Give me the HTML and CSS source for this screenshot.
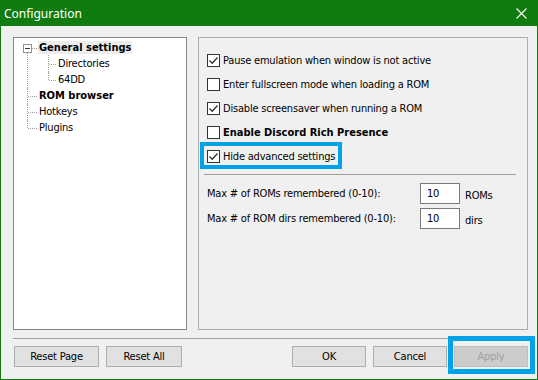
FILE: index.html
```html
<!DOCTYPE html>
<html lang="en">
<head>
    <meta charset="UTF-8">
    <title>Configuration</title>
    <link rel="stylesheet" href="styles.css">
</head>
<body>
    <div class="window">
        <div class="titlebar">
            <span class="title">Configuration</span>
            <svg class="close" width="11" height="11" viewBox="0 0 11 11">
                <path d="M0.5 0.5 L10.5 10.5 M10.5 0.5 L0.5 10.5" stroke="#fff" stroke-width="1.1" fill="none"/>
            </svg>
        </div>
        <div class="body">
            <div class="main">
                <div class="tree">
                    <ul class="tree-root">
                        <li class="first">
                            <span class="expander"></span>
                            <span class="node bold selected">General settings</span>
                            <ul class="tree-sub">
                                <li><span class="node">Directories</span></li>
                                <li><span class="node">64DD</span></li>
                            </ul>
                        </li>
                        <li><span class="node bold">ROM browser</span></li>
                        <li><span class="node">Hotkeys</span></li>
                        <li><span class="node">Plugins</span></li>
                    </ul>
                </div>
                <div class="panel">
                    <div class="options">
                        <div class="check-row">
                            <span class="checkbox"><svg width="11" height="11" viewBox="0 0 11 11"><path d="M1.5 5.5 L4.3 8.3 L9.5 2.5" stroke="#333" stroke-width="1.3" fill="none"/></svg></span>
                            <span>Pause emulation when window is not active</span>
                        </div>
                        <div class="check-row">
                            <span class="checkbox"></span>
                            <span>Enter fullscreen mode when loading a ROM</span>
                        </div>
                        <div class="check-row">
                            <span class="checkbox"><svg width="11" height="11" viewBox="0 0 11 11"><path d="M1.5 5.5 L4.3 8.3 L9.5 2.5" stroke="#333" stroke-width="1.3" fill="none"/></svg></span>
                            <span>Disable screensaver when running a ROM</span>
                        </div>
                        <div class="check-row">
                            <span class="checkbox"></span>
                            <span class="bold">Enable Discord Rich Presence</span>
                        </div>
                        <div class="check-row marked">
                            <span class="checkbox"><svg width="11" height="11" viewBox="0 0 11 11"><path d="M1.5 5.5 L4.3 8.3 L9.5 2.5" stroke="#333" stroke-width="1.3" fill="none"/></svg></span>
                            <span>Hide advanced settings</span>
                            <span class="highlight"></span>
                        </div>
                    </div>
                    <div class="panel-sep"></div>
                    <div class="fields">
                        <div class="field-row">
                            <span class="field-label">Max # of ROMs remembered (0-10):</span>
                            <span class="textbox">10</span>
                            <span class="unit">ROMs</span>
                        </div>
                        <div class="field-row">
                            <span class="field-label">Max # of ROM dirs remembered (0-10):</span>
                            <span class="textbox">10</span>
                            <span class="unit">dirs</span>
                        </div>
                    </div>
                </div>
            </div>
            <div class="separator"></div>
            <div class="buttons">
                <div class="btn-group">
                    <button class="btn wide">Reset Page</button>
                    <button class="btn mid">Reset All</button>
                </div>
                <div class="btn-group">
                    <button class="btn">OK</button>
                    <button class="btn">Cancel</button>
                    <button class="btn apply" disabled>Apply<span class="highlight"></span></button>
                </div>
            </div>
        </div>
    </div>
</body>
</html>
```

FILE: styles.css
```css
body {
    margin: 0;
    font-family: "DejaVu Sans Condensed", "Liberation Sans", Arial, sans-serif;
    font-size: 11px;
    letter-spacing: -0.2px;
    color: #000;
}
.window {
    width: 538px;
    height: 380px;
    box-sizing: border-box;
    background: #f0f0f0;
    border: 1px solid #107c10;
    border-top: none;
}
.titlebar {
    height: 26px;
    margin: 0 -1px;
    background: #107c10;
    display: flex;
    align-items: center;
    justify-content: space-between;
    padding: 0 11px 0 4px;
}
.title {
    color: #fff;
    font-family: "Noto Sans", sans-serif;
    font-size: 12px;
    letter-spacing: 0;
}
.close {
    display: block;
}
.body {
    padding: 11px 9px 0 12px;
}
.main {
    display: flex;
    gap: 11px;
    height: 293px;
}
.bold {
    font-weight: bold;
    letter-spacing: 0;
}

/* tree */
.tree {
    width: 174px;
    box-sizing: border-box;
    background: #fff;
    border: 1px solid #828790;
    padding-top: 2px;
}
.tree ul {
    list-style: none;
    margin: 0;
}
.tree li {
    position: relative;
    line-height: 16px;
}
.tree li::before {
    content: '';
    position: absolute;
    left: 1px;
    top: 8px;
    width: 9px;
    border-top: 1px dotted #a0a0a0;
}
.tree li::after {
    content: '';
    position: absolute;
    left: 0;
    top: 0;
    bottom: 0;
    border-left: 1px dotted #a0a0a0;
}
.tree li.first::after {
    top: 13px;
}
.tree li:last-child::after {
    bottom: auto;
    height: 8px;
}
.tree-root {
    padding: 0 0 0 13px;
}
.tree-root > li {
    padding-left: 11px;
}
.tree-sub {
    padding: 0 0 0 10px;
}
.tree-sub > li {
    padding-left: 9px;
}
.tree-sub > li::before {
    width: 7px;
}
.tree-sub > li:first-child::after {
    top: -1px;
}
.node {
    padding: 0 1px;
}
.node.selected {
    background: #ececec;
}
.expander {
    position: absolute;
    left: -4px;
    top: 4px;
    width: 9px;
    height: 9px;
    box-sizing: border-box;
    border: 1px solid #919191;
    background: #fff;
    z-index: 1;
}
.expander::after {
    content: '';
    position: absolute;
    left: 1px;
    top: 3px;
    width: 5px;
    border-top: 1px solid #333;
}

/* settings panel */
.panel {
    width: 330px;
    box-sizing: border-box;
    border: 1px solid #adadad;
    padding-top: 10px;
}
.options {
    padding-left: 8px;
}
.check-row {
    position: relative;
    display: flex;
    align-items: center;
    gap: 3px;
    height: 24px;
}
.checkbox {
    width: 13px;
    height: 13px;
    box-sizing: border-box;
    border: 1px solid #333;
    background: #fff;
    display: flex;
    align-items: center;
    justify-content: center;
}
.checkbox svg {
    display: block;
}
.highlight {
    position: absolute;
    border: 4px solid #00a2e8;
}
.check-row .highlight {
    left: -7px;
    top: -2px;
    width: 142px;
    height: 27px;
    box-sizing: border-box;
}
.panel-sep {
    margin: 6px 11px 0 5px;
    border-top: 1px solid #a0a0a0;
}
.fields {
    padding: 8px 0 0 8px;
    display: flex;
    flex-direction: column;
    gap: 4px;
}
.field-row {
    display: flex;
    align-items: center;
    height: 21px;
}
.field-label {
    width: 213px;
}
.textbox {
    width: 40px;
    height: 21px;
    box-sizing: border-box;
    border: 1px solid #7a7a7a;
    background: #fff;
    padding-left: 6px;
    line-height: 19px;
}
.unit {
    margin-left: 5px;
    padding-top: 3px;
}

/* bottom buttons */
.separator {
    margin: 8px 0 7px 0;
    border-top: 1px solid #a0a0a0;
}
.buttons {
    display: flex;
    justify-content: space-between;
}
.btn-group {
    display: flex;
    gap: 7px;
}
.btn-group:first-child {
    padding-left: 1px;
}
.btn {
    position: relative;
    width: 74px;
    height: 21px;
    box-sizing: border-box;
    background: #e1e1e1;
    border: 1px solid #adadad;
    font-family: inherit;
    font-size: 11px;
    letter-spacing: inherit;
    color: #000;
    padding: 0;
}
.btn.wide {
    width: 85px;
}
.btn.mid {
    width: 76px;
}
.btn.apply {
    background: #cccccc;
    border-color: #bfbfbf;
    color: #a0a0a0;
}
.btn .highlight {
    left: -7px;
    top: -11px;
    right: -8px;
    bottom: -8px;
    border-width: 5px;
}
```
